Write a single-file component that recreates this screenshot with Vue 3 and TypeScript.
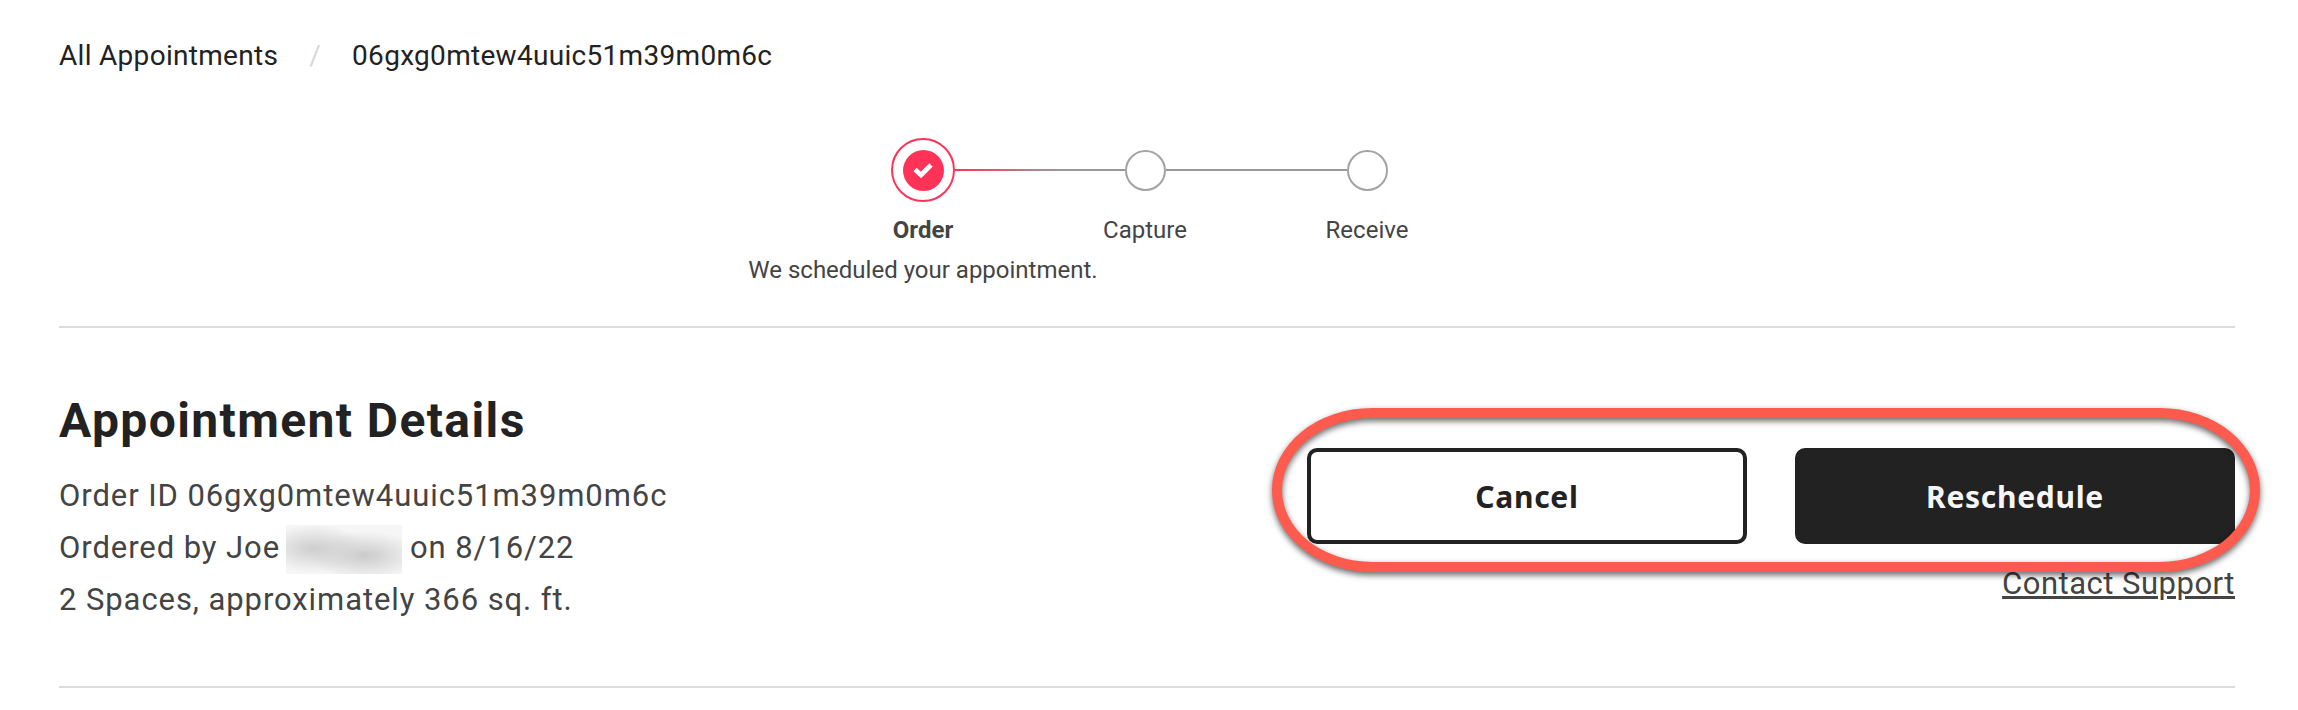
<script setup lang="ts">
const steps: { label: string; active?: boolean }[] = [
  { label: 'Order', active: true },
  { label: 'Capture' },
  { label: 'Receive' },
]
</script>

<template>
  <main class="page">
    <nav class="crumbs">
      <span>All Appointments</span>
      <span class="sep">/</span>
      <span>06gxg0mtew4uuic51m39m0m6c</span>
    </nav>

    <section class="stepper">
      <div class="track">
        <span class="ring">
          <svg class="check" width="41" height="41" viewBox="0 0 41 41">
            <circle cx="20.5" cy="20.5" r="20.5" fill="#ff3358" />
            <path d="M12 19.5 L18 25 L28 15" fill="none" stroke="#fff" stroke-width="4.6" />
          </svg>
        </span>
        <span class="line first"></span>
        <span class="dot"></span>
        <span class="line second"></span>
        <span class="dot"></span>
      </div>
      <div class="labels">
        <span v-for="s in steps" :key="s.label" class="label" :class="{ active: s.active }">{{ s.label }}</span>
      </div>
      <div class="caption"><span>We scheduled your appointment.</span></div>
    </section>

    <hr class="rule rule-top" />

    <section class="details">
      <div class="info">
        <h1>Appointment Details</h1>
        <p>Order ID 06gxg0mtew4uuic51m39m0m6c</p>
        <p class="ordered">Ordered by Joe<span class="blur"></span>on 8/16/22</p>
        <p>2 Spaces, approximately 366 sq. ft.</p>
      </div>
      <div class="actions">
        <div class="buttons">
          <button class="btn ghost">Cancel</button>
          <button class="btn solid">Reschedule</button>
        </div>
        <a class="support">Contact Support</a>
        <div class="callout"></div>
      </div>
    </section>

    <hr class="rule rule-bottom" />
  </main>
</template>

<style>
html, body { margin: 0; background: #fff; }
</style>

<style scoped>
.page {
  width: 2298px;
  height: 710px;
  box-sizing: border-box;
  padding: 0 63px 0 59px;
  overflow: hidden;
  font-family: Roboto, "Liberation Sans", sans-serif;
  color: #444;
}
.crumbs {
  display: flex;
  align-items: center;
  padding-top: 39px;
  height: 34px;
  font-size: 28px;
  line-height: 34px;
  letter-spacing: 0.3px;
  color: #222;
}
.sep { margin: 0 31px 0 31px; color: #d8d8d8; font-size: 28px; }
.stepper { margin: 65px 0 0 753px; width: 666px; font-size: 24px; }
.track { display: flex; align-items: center; padding-left: 79px; height: 64px; }
.ring {
  box-sizing: border-box;
  width: 64px;
  height: 64px;
  flex: none;
  border: 2px solid #ff3358;
  border-radius: 50%;
  display: flex;
  align-items: center;
  justify-content: center;
}
.check { display: block; }
.line { height: 2px; background: #999; flex: none; }
.line.first { width: 170px; background: linear-gradient(to right, #ff3358, #999 60%); }
.line.second { width: 181px; }
.dot {
  box-sizing: border-box;
  width: 41px;
  height: 41px;
  flex: none;
  border: 2px solid #a3a3a3;
  border-radius: 50%;
}
.labels { display: grid; grid-template-columns: repeat(3, 222px); margin-top: 13px; line-height: 30px; }
.label { text-align: center; }
.label.active { font-weight: 700; }
.caption { width: 222px; display: flex; justify-content: center; white-space: nowrap; margin-top: 10px; line-height: 30px; }
.rule { border: 0; height: 2px; background: #dcdcdc; margin: 0; width: 2176px; }
.rule-top { margin-top: 41px; }
.details { display: flex; justify-content: space-between; height: 358px; }
.info h1 {
  margin: 65px 0 0;
  font-size: 48px;
  line-height: 56px;
  font-weight: 700;
  letter-spacing: 1.4px;
  color: #222;
}
.info p {
  margin: 0;
  font-size: 31px;
  line-height: 52px;
  letter-spacing: 0.92px;
  white-space: nowrap;
}
.info h1 + p { margin-top: 21px; }
.blur {
  display: inline-block;
  width: 116px;
  height: 49px;
  vertical-align: middle;
  margin: 0 8px 0 6px;
  background:
    radial-gradient(ellipse 52px 24px at 24% 48%, #cdcdcd 0%, rgba(220, 220, 220, 0) 100%),
    radial-gradient(ellipse 56px 24px at 68% 62%, #cacaca 0%, rgba(220, 220, 220, 0) 100%),
    #f6f6f6;
}
.actions { position: relative; width: 928px; padding-top: 120px; display: flex; flex-direction: column; align-items: flex-end; }
.buttons { display: flex; gap: 48px; }
.btn {
  box-sizing: border-box;
  width: 440px;
  height: 96px;
  border-radius: 10px;
  border: 4px solid #222;
  font-family: "Noto Sans", Roboto, sans-serif;
  font-size: 30px;
  font-weight: 700;
  letter-spacing: 0.7px;
  cursor: pointer;
}
.ghost { background: #fff; color: #222; }
.solid { background: #222; color: #f6f6f6; }
.support {
  margin-top: 22px;
  font-size: 31px;
  line-height: 36px;
  letter-spacing: 0.5px;
  color: #444;
  text-decoration: underline;
}
.callout {
  position: absolute;
  left: -35px;
  top: 80px;
  width: 988px;
  height: 164px;
  box-sizing: border-box;
  border: 10px solid #ff5a4e;
  border-radius: 100px / 82px;
  filter: drop-shadow(0 3px 3px rgba(0, 0, 0, 0.6));
  pointer-events: none;
}
</style>
